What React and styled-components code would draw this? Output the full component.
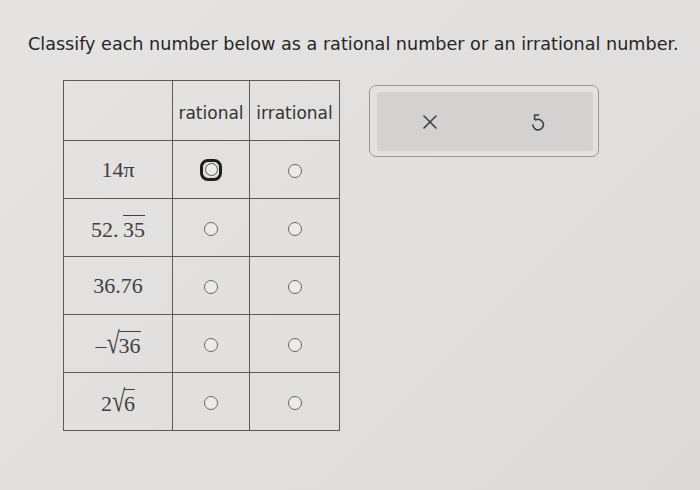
import React from 'react'
import styled, { createGlobalStyle } from 'styled-components'

const GlobalStyle = createGlobalStyle`
    body {
        margin: 0;
        background: #e3e1df;
        font-family: "DejaVu Sans", Verdana, sans-serif;
    }
`

const Page = styled.div`
    width: 700px;
    height: 490px;
    box-sizing: border-box;
    padding: 33px 0 0 28px;
    background: linear-gradient(135deg, #e6e4e2 0%, #e1dfdd 60%, #dcdad8 100%);
    color: #2a2a2a;
`

const Prompt = styled.p`
    margin: 0;
    font-size: 17.6px;
    line-height: 22px;
    color: #262626;
`

const Body = styled.div`
    display: flex;
    align-items: flex-start;
    gap: 29px;
    margin: 25px 0 0 35px;
`

const Table = styled.table`
    border-collapse: collapse;
    border: 1.5px solid #4a4a4a;
`

const HeadCell = styled.th`
    height: 55px;
    padding: 4px 0 0;
    border: 1px solid #5a5a5a;
    font-weight: normal;
    font-size: 17px;
    color: #333;
    width: ${p => p.$w}px;
    vertical-align: middle;
`

const Cell = styled.td`
    height: 57px;
    padding: 0;
    border: 1px solid #5a5a5a;
    text-align: center;
    vertical-align: middle;
`

const MathText = styled.span`
    font-family: "Liberation Serif", "Times New Roman", serif;
    font-size: 22px;
    color: #404040;
    display: inline-flex;
    align-items: flex-end;
    line-height: 1;
`

const Over = styled.span`
    border-top: 1.5px solid #404040;
    padding-top: 3px;
    line-height: 1;
`

const Radical = styled.span`
    font-size: 24px;
    line-height: 1;
    display: inline-block;
    transform: scaleY(1.28) translateY(1px);
    transform-origin: bottom;
    margin-right: -1px;
`

const Radio = styled.span`
    display: inline-block;
    width: 12px;
    height: 12px;
    border-radius: 50%;
    border: 1.3px solid #666;
    background: #ecebea;
    vertical-align: middle;
`

const Selected = styled.span`
    display: inline-flex;
    align-items: center;
    justify-content: center;
    width: 16px;
    height: 16px;
    border: 3px solid #1e1e1e;
    border-radius: 8px;
    vertical-align: middle;

    span {
        width: 11px;
        height: 11px;
        border-radius: 50%;
        border: 1.5px solid #555;
        background: #ecebea;
    }
`

const Panel = styled.div`
    margin-top: 5px;
    padding: 6px 5px 5px 7px;
    border: 1.5px solid #9a9896;
    border-radius: 7px;
    background: #e4e2e0;
`

const Tools = styled.div`
    width: 216px;
    height: 59px;
    border-radius: 3px;
    background: #d3d2d1;
    display: flex;
    align-items: center;
    justify-content: space-between;
    padding: 0 48px 0 45px;
    box-sizing: border-box;
`

const ToolButton = styled.button`
    border: none;
    background: none;
    padding: 0;
    display: flex;
    color: #3a3f48;
`

function Expr({ value }) {
    if (value === 'pi') return <MathText>14π</MathText>
    if (value === 'rep') return <MathText>52.&thinsp;<Over>35</Over></MathText>
    if (value === 'neg') return <MathText>–<Radical>√</Radical><Over>36</Over></MathText>
    if (value === 'root') return <MathText>2<Radical>√</Radical><Over>6</Over></MathText>
    return <MathText>{value}</MathText>
}

const rows = [
    { id: 'pi', choice: 'rational' },
    { id: 'rep' },
    { id: '36.76' },
    { id: 'neg' },
    { id: 'root' },
]

export default function App() {
    return (
        <Page>
            <GlobalStyle />
            <Prompt>Classify each number below as a rational number or an irrational number.</Prompt>
            <Body>
                <Table>
                    <thead>
                        <tr>
                            <HeadCell $w={108}></HeadCell>
                            <HeadCell $w={76}>rational</HeadCell>
                            <HeadCell $w={89}>irrational</HeadCell>
                        </tr>
                    </thead>
                    <tbody>
                        {rows.map(row => (
                            <tr key={row.id}>
                                <Cell><Expr value={row.id} /></Cell>
                                <Cell>
                                    {row.choice === 'rational'
                                        ? <Selected><span /></Selected>
                                        : <Radio />}
                                </Cell>
                                <Cell><Radio /></Cell>
                            </tr>
                        ))}
                    </tbody>
                </Table>
                <Panel>
                    <Tools>
                        <ToolButton aria-label="clear">
                            <svg width="16" height="16" viewBox="0 0 16 16" fill="none" stroke="currentColor" strokeWidth="1.6" strokeLinecap="round">
                                <path d="M2 2 L14 14 M14 2 L2 14" />
                            </svg>
                        </ToolButton>
                        <ToolButton aria-label="undo">
                            <svg width="14" height="18" viewBox="0 0 14 18" fill="none" stroke="currentColor" strokeWidth="1.6" strokeLinecap="round" strokeLinejoin="round">
                                <path d="M7.6 2 H3.6 V6" />
                                <path d="M3.6 6 L4.6 6.9 A5.3 5.3 0 1 1 1.8 12" />
                            </svg>
                        </ToolButton>
                    </Tools>
                </Panel>
            </Body>
        </Page>
    )
}
